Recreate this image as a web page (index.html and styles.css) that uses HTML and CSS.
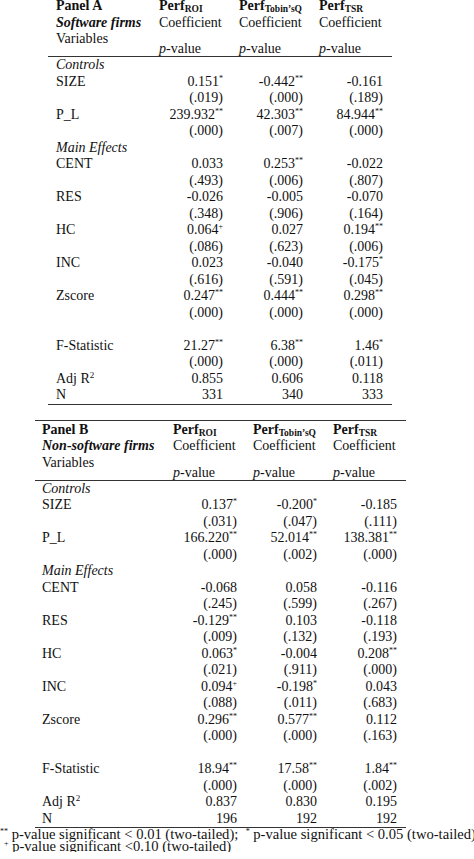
FILE: index.html
```html
<!DOCTYPE html>
<html>
<head>
<meta charset="utf-8">
<link rel="stylesheet" href="styles.css">
</head>
<body>
<table class="panel panel-a">
  <colgroup><col class="c-label-a"><col class="c-num"><col class="c-num"><col class="c-last"></colgroup>
  <thead>
    <tr class="h1"><th class="lab"><b>Panel A</b></th><th><b>Perf<sub>ROI</sub></b></th><th><b>Perf<sub>Tobin’sQ</sub></b></th><th><b>Perf<sub>TSR</sub></b></th></tr>
    <tr class="h2"><th class="lab"><b><i>Software firms</i></b></th><th>Coefficient</th><th>Coefficient</th><th>Coefficient</th></tr>
    <tr class="h3"><th class="lab var">Variables</th><th class="pv"><i>p</i>-value</th><th class="pv"><i>p</i>-value</th><th class="pv"><i>p</i>-value</th></tr>
  </thead>
  <tbody>
    <tr><td class="lab"><i>Controls</i></td><td></td><td></td><td></td></tr>
    <tr><td class="lab">SIZE</td><td>0.151<sup>*</sup></td><td>-0.442<sup>**</sup></td><td>-0.161</td></tr>
    <tr><td class="lab"></td><td>(.019)</td><td>(.000)</td><td>(.189)</td></tr>
    <tr><td class="lab">P_L</td><td>239.932<sup>**</sup></td><td>42.303<sup>**</sup></td><td>84.944<sup>**</sup></td></tr>
    <tr><td class="lab"></td><td>(.000)</td><td>(.007)</td><td>(.000)</td></tr>
    <tr><td class="lab"><i>Main Effects</i></td><td></td><td></td><td></td></tr>
    <tr><td class="lab">CENT</td><td>0.033</td><td>0.253<sup>**</sup></td><td>-0.022</td></tr>
    <tr><td class="lab"></td><td>(.493)</td><td>(.006)</td><td>(.807)</td></tr>
    <tr><td class="lab">RES</td><td>-0.026</td><td>-0.005</td><td>-0.070</td></tr>
    <tr><td class="lab"></td><td>(.348)</td><td>(.906)</td><td>(.164)</td></tr>
    <tr><td class="lab">HC</td><td>0.064<sup>+</sup></td><td>0.027</td><td>0.194<sup>**</sup></td></tr>
    <tr><td class="lab"></td><td>(.086)</td><td>(.623)</td><td>(.006)</td></tr>
    <tr><td class="lab">INC</td><td>0.023</td><td>-0.040</td><td>-0.175<sup>*</sup></td></tr>
    <tr><td class="lab"></td><td>(.616)</td><td>(.591)</td><td>(.045)</td></tr>
    <tr><td class="lab">Zscore</td><td>0.247<sup>**</sup></td><td>0.444<sup>**</sup></td><td>0.298<sup>**</sup></td></tr>
    <tr><td class="lab"></td><td>(.000)</td><td>(.000)</td><td>(.000)</td></tr>
    <tr><td class="lab"></td><td></td><td></td><td></td></tr>
    <tr><td class="lab">F-Statistic</td><td>21.27<sup>**</sup></td><td>6.38<sup>**</sup></td><td>1.46<sup>*</sup></td></tr>
    <tr><td class="lab"></td><td>(.000)</td><td>(.000)</td><td>(.011)</td></tr>
    <tr><td class="lab">Adj R<sup class="sq">2</sup></td><td>0.855</td><td>0.606</td><td>0.118</td></tr>
    <tr><td class="lab">N</td><td>331</td><td>340</td><td>333</td></tr>
  </tbody>
</table>

<table class="panel panel-b">
  <colgroup><col class="c-label-b"><col class="c-num"><col class="c-num"><col class="c-last"></colgroup>
  <thead>
    <tr class="h1"><th class="lab"><b>Panel B</b></th><th><b>Perf<sub>ROI</sub></b></th><th><b>Perf<sub>Tobin’sQ</sub></b></th><th><b>Perf<sub>TSR</sub></b></th></tr>
    <tr class="h2"><th class="lab"><b><i>Non-software firms</i></b></th><th>Coefficient</th><th>Coefficient</th><th>Coefficient</th></tr>
    <tr class="h3"><th class="lab var">Variables</th><th class="pv"><i>p</i>-value</th><th class="pv"><i>p</i>-value</th><th class="pv"><i>p</i>-value</th></tr>
  </thead>
  <tbody>
    <tr><td class="lab"><i>Controls</i></td><td></td><td></td><td></td></tr>
    <tr><td class="lab">SIZE</td><td>0.137<sup>*</sup></td><td>-0.200<sup>*</sup></td><td>-0.185</td></tr>
    <tr><td class="lab"></td><td>(.031)</td><td>(.047)</td><td>(.111)</td></tr>
    <tr><td class="lab">P_L</td><td>166.220<sup>**</sup></td><td>52.014<sup>**</sup></td><td>138.381<sup>**</sup></td></tr>
    <tr><td class="lab"></td><td>(.000)</td><td>(.002)</td><td>(.000)</td></tr>
    <tr><td class="lab"><i>Main Effects</i></td><td></td><td></td><td></td></tr>
    <tr><td class="lab">CENT</td><td>-0.068</td><td>0.058</td><td>-0.116</td></tr>
    <tr><td class="lab"></td><td>(.245)</td><td>(.599)</td><td>(.267)</td></tr>
    <tr><td class="lab">RES</td><td>-0.129<sup>**</sup></td><td>0.103</td><td>-0.118</td></tr>
    <tr><td class="lab"></td><td>(.009)</td><td>(.132)</td><td>(.193)</td></tr>
    <tr><td class="lab">HC</td><td>0.063<sup>*</sup></td><td>-0.004</td><td>0.208<sup>**</sup></td></tr>
    <tr><td class="lab"></td><td>(.021)</td><td>(.911)</td><td>(.000)</td></tr>
    <tr><td class="lab">INC</td><td>0.094<sup>+</sup></td><td>-0.198<sup>*</sup></td><td>0.043</td></tr>
    <tr><td class="lab"></td><td>(.088)</td><td>(.011)</td><td>(.683)</td></tr>
    <tr><td class="lab">Zscore</td><td>0.296<sup>**</sup></td><td>0.577<sup>**</sup></td><td>0.112</td></tr>
    <tr><td class="lab"></td><td>(.000)</td><td>(.000)</td><td>(.163)</td></tr>
    <tr><td class="lab"></td><td></td><td></td><td></td></tr>
    <tr><td class="lab">F-Statistic</td><td>18.94<sup>**</sup></td><td>17.58<sup>**</sup></td><td>1.84<sup>**</sup></td></tr>
    <tr><td class="lab"></td><td>(.000)</td><td>(.000)</td><td>(.002)</td></tr>
    <tr><td class="lab">Adj R<sup class="sq">2</sup></td><td>0.837</td><td>0.830</td><td>0.195</td></tr>
    <tr><td class="lab">N</td><td>196</td><td>192</td><td>192</td></tr>
  </tbody>
</table>

<p class="notes"><sup>**</sup> p-value significant &lt; 0.01 (two-tailed);&nbsp; <sup>*</sup> p-value significant &lt; 0.05 (two-tailed);<br><sup class="plus">+</sup> p-value significant &lt;0.10 (two-tailed)</p>
</body>
</html>
```
FILE: styles.css
```css
html, body {
  margin: 0;
  padding: 0;
  background: #fff;
}
body {
  font-family: "Liberation Serif", "Times New Roman", serif;
  font-size: 14px;
  color: #111;
  overflow: hidden;
}
.panel {
  border-collapse: collapse;
  table-layout: fixed;
  border-top: 1px solid #333;
  border-bottom: 1px solid #333;
}
.panel-a {
  width: 344px;
  margin: -4px 0 0 48px;
}
.panel-b {
  width: 371px;
  margin: 15px 0 0 35px;
}
.c-label-a { width: 111px; }
.c-label-b { width: 138px; }
.c-num { width: 80px; }
.c-last { width: 73px; }

.panel th, .panel td {
  padding: 0;
  font-weight: normal;
  text-align: left;
  white-space: nowrap;
}
.panel thead th {
  line-height: 16.5px;
  height: 16.5px;
  vertical-align: top;
}
.panel thead tr.h1 th { padding-top: 1px; }
.panel thead tr.h3 th {
  height: 25px;
  border-bottom: 1px solid #333;
}
.panel thead tr.h3 th.pv {
  vertical-align: bottom;
  line-height: 15px;
}
.panel-a .lab { padding-left: 8px; }
.panel-b .lab { padding-left: 7px; }

.panel tbody td {
  line-height: 16.5px;
  height: 16.5px;
  text-align: right;
  padding-right: 16px;
  vertical-align: top;
}
.panel tbody td:last-child { padding-right: 9px; }
.panel tbody td.lab {
  text-align: left;
  padding-right: 0;
}

sup {
  font-size: 8px;
  line-height: 0;
  vertical-align: 5px;
}
sup.sq {
  font-size: 9px;
  vertical-align: 5px;
}
sub {
  font-size: 9.5px;
  line-height: 0;
  vertical-align: -2px;
}

.notes {
  margin: 0;
  padding-top: 1px;
  font-size: 14.6px;
  line-height: 11.5px;
  white-space: nowrap;
}
.notes sup {
  font-size: 8px;
  vertical-align: 5px;
}
.notes sup.plus {
  margin-left: 4px;
}
```
